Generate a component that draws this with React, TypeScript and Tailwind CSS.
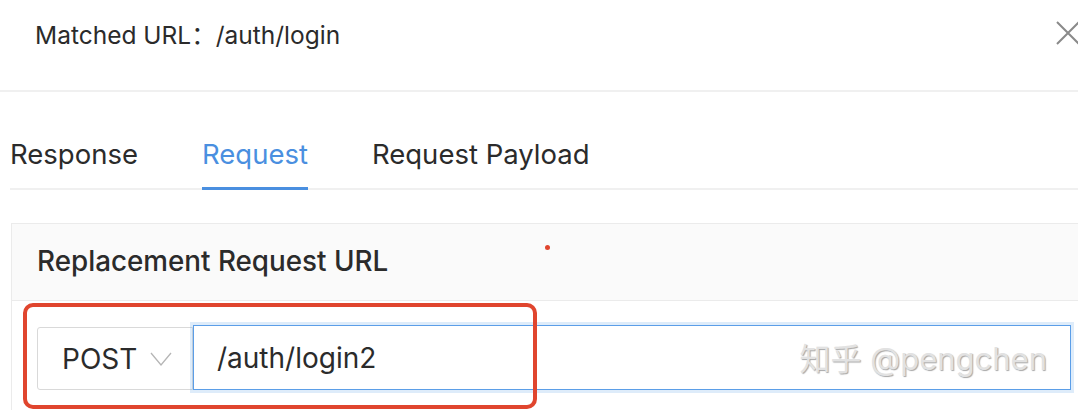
import React from "react";

export default function App() {
  return (
    <div className="relative w-[1078px] h-[410px] overflow-hidden bg-white text-[#2b2b2b] font-['Inter','Noto_Sans_CJK_SC',sans-serif]">
      {/* header */}
      <div className="flex h-[92px] items-start justify-between border-b-2 border-[#f0f0f0] pl-[35px]">
        <div className="pt-[21px] text-[24.5px] leading-[28px]">
          Matched URL：/auth/login
        </div>
        <svg className="mt-[21px] mr-[-2px]" width="24" height="24" viewBox="0 0 24 24">
          <path d="M1 1 L23 23 M23 1 L1 23" stroke="#8a8a8a" strokeWidth="2" fill="none" />
        </svg>
      </div>

      {/* tabs */}
      <div className="ml-[10px] mt-[46px] flex gap-[64px] border-b-2 border-[#f0f0f0] text-[27.5px] leading-[32px]">
        <div className="-mb-[2px] border-b-[3px] border-transparent pb-[17px]">Response</div>
        <div className="-mb-[2px] border-b-[3px] border-[#4a8fe0] pb-[17px] text-[#4a8fe0]">Request</div>
        <div className="-mb-[2px] border-b-[3px] border-transparent pb-[17px]">Request Payload</div>
      </div>

      {/* card */}
      <div className="ml-[11px] mt-[33px] w-[1090px] border border-[#ebebeb]">
        <div className="flex h-[77px] items-center border-b border-[#ebebeb] bg-[#fafafa] pl-[25px] text-[27.8px] font-medium">
          Replacement Request URL
        </div>
        <div className="flex pl-[25px] pt-[26px] pb-[30px]">
          <div className="flex h-[63px] w-[156px] items-center justify-between rounded-l-[3px] border border-[#d9d9d9] pl-[24px] pr-[20px] text-[28px]">
            <span>POST</span>
            <svg width="22" height="14" viewBox="0 0 22 14">
              <path d="M1 1 L11 13 L21 1" stroke="#b5b5b5" strokeWidth="1.3" fill="none" />
            </svg>
          </div>
          <div className="relative flex h-[65px] w-[878px] -mt-[2px] items-center border border-[#5b9ee8] pl-[23px] text-[28px] shadow-[0_0_0_3px_rgba(91,158,232,0.2)]">
            /auth/login2
            <span className="absolute right-[23px] top-[13px] text-[31px] leading-[40px] text-[#e2e2e2] [text-shadow:1px_1px_1px_rgba(0,0,0,0.35)]">
              知乎 @pengchen
            </span>
          </div>
        </div>
      </div>

      {/* annotations */}
      <div className="absolute left-[545px] top-[245px] h-[5px] w-[5px] rounded-full bg-[#e0452e]" />
      <div className="absolute left-[23px] top-[303px] h-[106px] w-[514px] rounded-[10px] border-[4px] border-[#e0452e]" />
    </div>
  );
}
